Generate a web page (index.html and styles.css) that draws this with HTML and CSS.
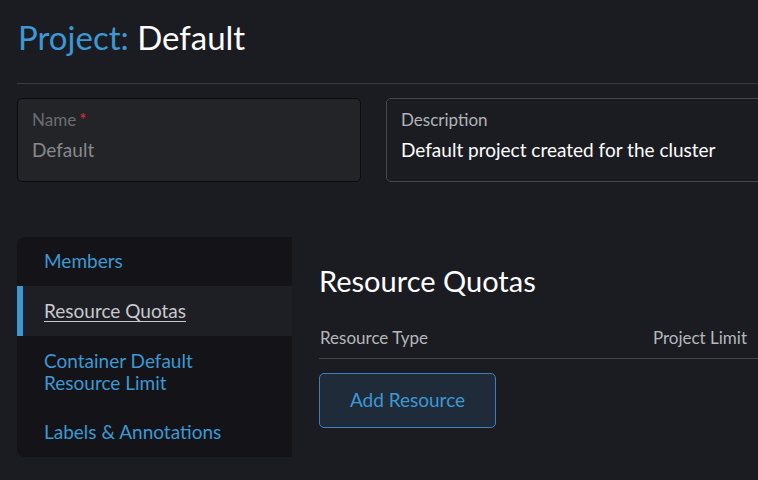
FILE: index.html
```html
<!DOCTYPE html>
<html>
<head>
<meta charset="utf-8">
<link rel="stylesheet" href="styles.css">
</head>
<body>
<div class="page">
  <h1 class="title"><span class="title-key">Project:</span> Default</h1>
  <hr class="divider">
  <div class="fields">
    <div class="field field-name">
      <div class="field-label">Name<span class="req">*</span></div>
      <div class="field-value">Default</div>
    </div>
    <div class="field field-desc">
      <div class="field-label">Description</div>
      <div class="field-value">Default project created for the cluster</div>
    </div>
  </div>
  <div class="tabs">
    <nav class="tab-list">
      <a class="tab">Members</a>
      <a class="tab active">Resource Quotas</a>
      <a class="tab tab-wrap">Container Default<br>Resource Limit</a>
      <a class="tab">Labels &amp; Annotations</a>
    </nav>
    <section class="tab-body">
      <h2 class="tab-heading">Resource Quotas</h2>
      <div class="table-head">
        <span>Resource Type</span>
        <span>Project Limit</span>
      </div>
      <button class="btn">Add Resource</button>
    </section>
  </div>
</div>
</body>
</html>
```
FILE: styles.css
```css
html, body {
  margin: 0;
  padding: 0;
  background: #1b1c21;
  overflow: hidden;
  font-family: Lato, "Open Sans", sans-serif;
}
.page {
  width: 800px;
  padding: 0 0 0 17px;
  box-sizing: border-box;
}
.title {
  margin: 0;
  padding: 17px 0 0 1px;
  height: 66px;
  box-sizing: border-box;
  font-size: 33px;
  font-weight: 400;
  line-height: 40px;
  color: #ffffff;
}
.title-key { color: #3d98d3; }
.divider {
  margin: 0;
  border: 0;
  border-top: 1px solid #3b3c42;
  margin-top: 17px;
}
.fields {
  display: grid;
  grid-template-columns: 344px 1fr;
  gap: 25px;
  margin-top: 14px;
}
.field {
  height: 84px;
  box-sizing: border-box;
  border-radius: 5px;
  padding: 10px 14px;
}
.field-name {
  background: #232427;
  border: 1px solid #0c0c0e;
}
.field-desc {
  background: #1b1c21;
  border: 1px solid #46474c;
}
.field-label {
  font-size: 17px;
  line-height: 22px;
  color: #6c6d74;
}
.field-desc .field-label { color: #b2b3b8; }
.req { color: #e0313b; margin-left: 3px; }
.field-value {
  margin-top: 6px;
  font-size: 19px;
  line-height: 26px;
  color: #88898e;
}
.field-desc .field-value { color: #ffffff; }
.tabs {
  display: flex;
  margin-top: 55px;
  height: 220px;
}
.tab-list {
  width: 275px;
  flex: none;
  background: #141418;
  border-radius: 8px 0 0 8px;
  display: flex;
  flex-direction: column;
}
.tab {
  display: block;
  padding: 12px 0 13px 27px;
  font-size: 19px;
  line-height: 24px;
  color: #3d98d3;
}
.tab-wrap { line-height: 22px; padding-top: 14px; padding-bottom: 14px; }
.tab.active {
  background: #1e1f24;
  color: #c8c9cd;
  text-decoration: underline;
  text-underline-offset: 3px;
  border-left: 6px solid #3d98d3;
  padding: 13px 0 13px 21px;
}
.tab-body {
  flex: 1;
  background: #1b1c21;
  padding: 25px 0 0 27px;
}
.tab-heading {
  margin: 0;
  font-size: 29px;
  font-weight: 400;
  line-height: 38px;
  color: #ffffff;
}
.table-head {
  display: flex;
  justify-content: space-between;
  width: 439px;
  box-sizing: border-box;
  margin-top: 27px;
  padding: 0 11px 9px 1px;
  border-bottom: 1px solid #44454a;
  font-size: 17px;
  line-height: 22px;
  color: #b6b7bb;
}
.btn {
  margin-top: 14px;
  width: 177px;
  height: 55px;
  background: #1f2b39;
  border: 1px solid #3c7fbf;
  border-radius: 5px;
  color: #3d98d3;
  font-family: Lato, sans-serif;
  font-size: 19px;
  line-height: 24px;
  padding: 0 0 2px;
}
```
